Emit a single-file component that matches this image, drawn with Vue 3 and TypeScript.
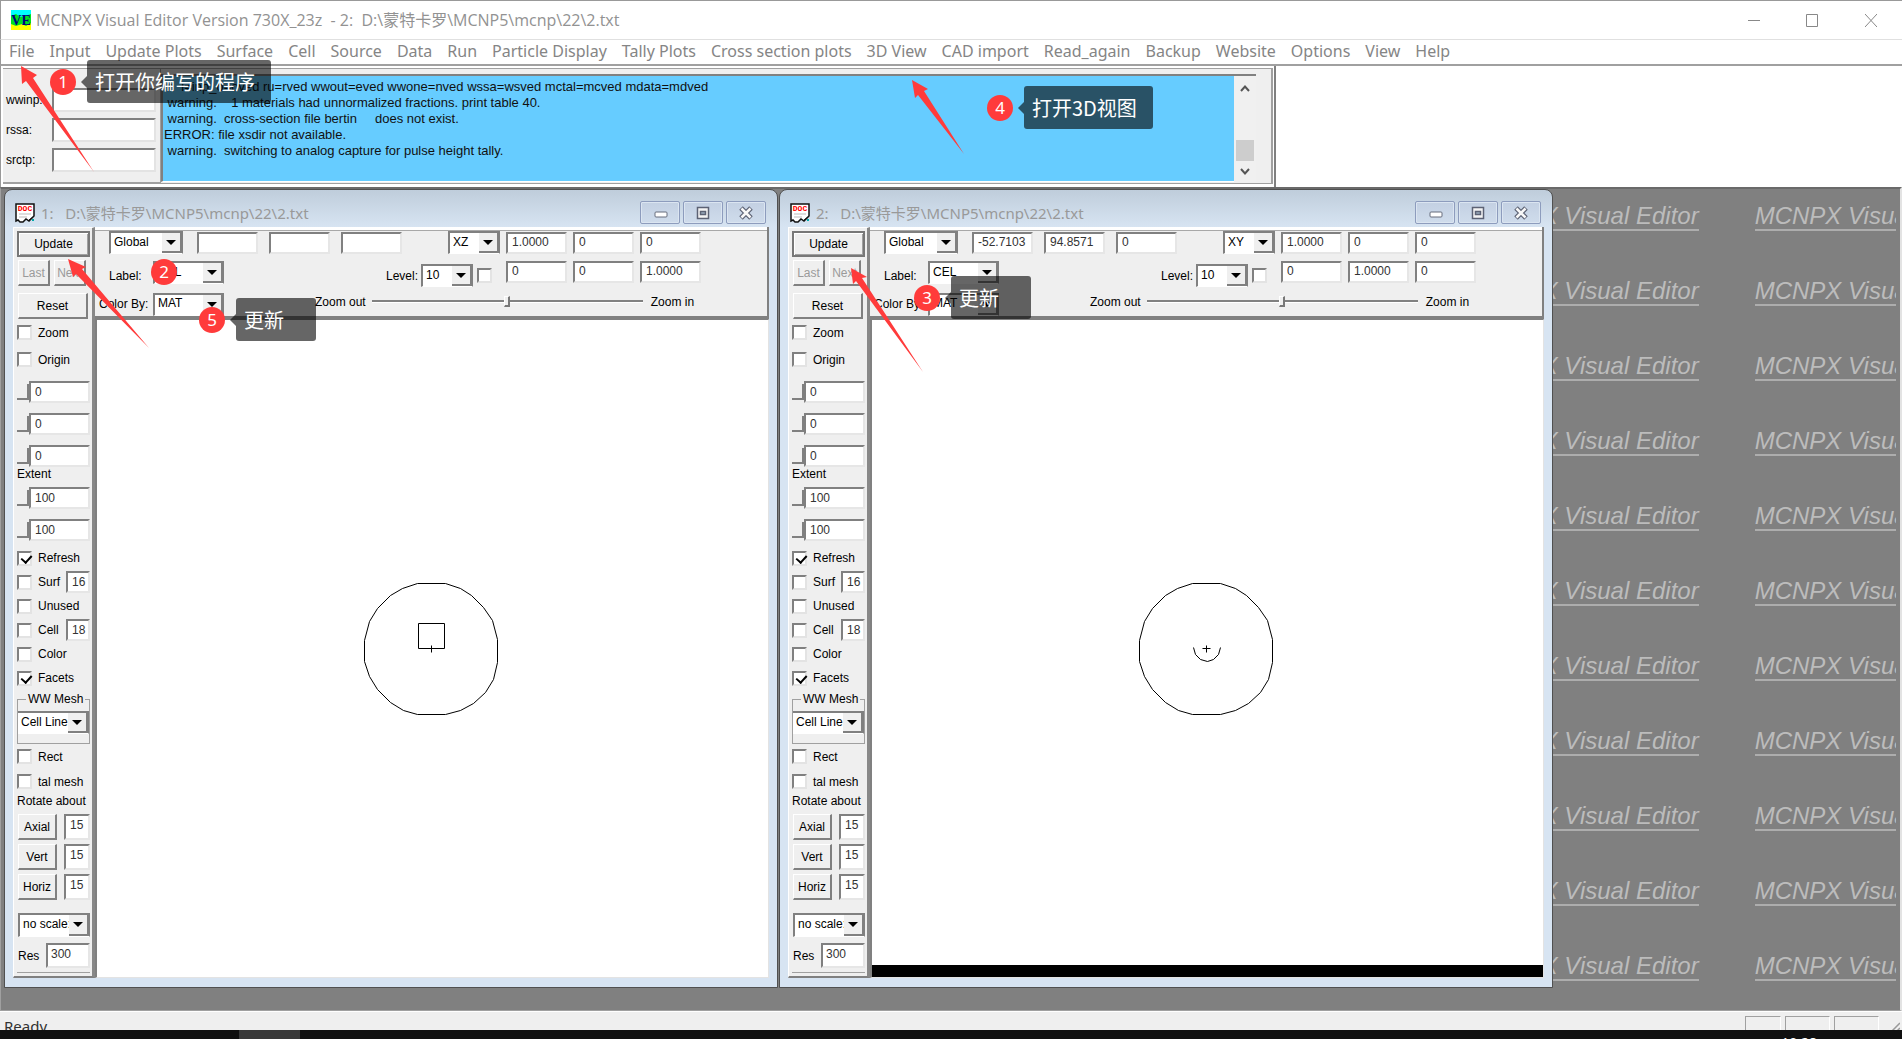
<script setup lang="ts">
import { reactive } from 'vue'

interface PlotWindow {
  id: number
  origin: string[]
  plane: string
  basisTop: string[]
  basisBottom: string[]
}

const filePath = 'D:\\蒙特卡罗\\MCNP5\\mcnp\\22\\2.txt'

const menus: string[] = [
  'File', 'Input', 'Update Plots', 'Surface', 'Cell', 'Source', 'Data', 'Run',
  'Particle Display', 'Tally Plots', 'Cross section plots', '3D View', 'CAD import',
  'Read_again', 'Backup', 'Website', 'Options', 'View', 'Help',
]

const fileFields: string[] = ['wwinp:', 'rssa:', 'srctp:']

const log = [
  'in  i=inp_o=oved ru=rved wwout=eved wwone=nved wssa=wsved mctal=mcved mdata=mdved',
  ' warning.    1 materials had unnormalized fractions. print table 40.',
  ' warning.  cross-section file bertin     does not exist.',
  'ERROR: file xsdir not available.',
  ' warning.  switching to analog capture for pulse height tally.',
].join('\n')

const windows = reactive<PlotWindow[]>([
  { id: 1, origin: ['', '', ''], plane: 'XZ', basisTop: ['1.0000', '0', '0'], basisBottom: ['0', '0', '1.0000'] },
  { id: 2, origin: ['-52.7103', '94.8571', '0'], plane: 'XY', basisTop: ['1.0000', '0', '0'], basisBottom: ['0', '1.0000', '0'] },
])

const options = [
  { label: 'Refresh', on: true, size: '' },
  { label: 'Surf', on: false, size: '16' },
  { label: 'Unused', on: false, size: '' },
  { label: 'Cell', on: false, size: '18' },
  { label: 'Color', on: false, size: '' },
  { label: 'Facets', on: true, size: '' },
]

const callouts = [
  { n: 1, x: 50, y: 59, text: '打开你编写的程序' },
  { n: 2, x: 151, y: 249, text: '' },
  { n: 3, x: 914, y: 275, text: '更新' },
  { n: 4, x: 987, y: 85, text: '打开3D视图' },
  { n: 5, x: 199, y: 297, text: '更新' },
]

const arrows: string[] = [
  '21,66 37,75 33,78 94,172 26,81 22,84',
  '68,259 86,267 82,269 149,348 76,274 73,277',
  '851,268 867,277 862,278 923,372 856,281 853,284',
  '912,80 928,89 924,91 964,154 918,95 915,98',
]
</script>

<template>
  <div class="app">
    <header class="titlebar">
      <svg class="logo" viewBox="0 0 20 20" aria-hidden="true">
        <rect width="20" height="20" fill="#ffff00" />
        <path d="M0 0H20V12L16 10 12 13 6 8 0 10Z" fill="#00ffff" />
        <path d="M0 6L5 4 9 7 14 6 20 4V13L15 16 11 14 5 16 0 14Z" fill="#00e020" />
        <text x="10" y="15" text-anchor="middle" class="logo-text">VE</text>
      </svg>
      <span class="title">MCNPX Visual Editor Version 730X_23z&nbsp; - 2:&nbsp; {{ filePath }}</span>
      <div class="win-controls">
        <button type="button" aria-label="Minimize"><svg viewBox="0 0 12 13"><path d="M0 6.500H12" /></svg></button>
        <button type="button" aria-label="Maximize"><svg viewBox="0 0 12 13"><path d="M.5.5H11.500V12.500H.5Z" /></svg></button>
        <button type="button" aria-label="Close"><svg viewBox="0 0 12 13"><path d="M0 0L12 13M12 0L0 13" /></svg></button>
      </div>
    </header>

    <nav class="menubar">
      <button v-for="m in menus" :key="m" type="button">{{ m }}</button>
    </nav>

    <section class="dialogbar">
      <div class="panel">
        <div class="files">
          <label v-for="f in fileFields" :key="f"><span>{{ f }}</span><input type="text" /></label>
        </div>
        <div class="log">
          <textarea readonly aria-label="Messages" wrap="off" :value="log"></textarea>
          <div class="scroll">
            <svg viewBox="0 0 10 8"><path d="M1 7L5 2.500 9 7" /></svg>
            <span class="thumb"></span>
            <svg viewBox="0 0 10 8"><path d="M1 1L5 5.500 9 1" /></svg>
          </div>
        </div>
      </div>
    </section>

    <main class="desktop">
      <div class="watermark" aria-hidden="true">
        <div v-for="r in 11" :key="r" class="mark-row">
          <span>MCNPX Visual Editor</span><span>MCNPX Visual Editor</span>
        </div>
      </div>

      <section v-for="w in windows" :key="w.id" class="child">
        <header class="child-title">
          <svg class="doc" viewBox="0 0 20 20" aria-hidden="true">
            <path d="M1 1H19V13L14 18 11 16 8 19H5L3 17 1 18Z" fill="#fff" stroke="#111" stroke-width="1.500" />
            <path d="M4 11H16M4 14H12" stroke="#bbb" />
            <path d="M14 17L18 14" fill="none" stroke="#111" />
            <path d="M17 17H19" stroke="#0aa" stroke-width="2" />
            <text x="10" y="8" text-anchor="middle" class="doc-text">DOC</text>
          </svg>
          <span>{{ w.id }}:&nbsp;&nbsp; {{ filePath }}</span>
          <div class="child-controls">
            <button type="button" aria-label="Minimize">
              <svg viewBox="0 0 16 14"><rect x="3" y="6" width="12" height="5" rx="1" fill="#fff" stroke="#666c7c" /></svg>
            </button>
            <button type="button" aria-label="Restore">
              <svg viewBox="0 0 16 14"><path d="M2.500 1.500H13.500V12.500H2.500Z" fill="#f4f4f4" stroke="#5c6274" stroke-width="1.500" /><path d="M5.500 5.500H10.500V8.500H5.500Z" fill="#9ab" stroke="#5c6274" stroke-width="1.500" /></svg>
            </button>
            <button type="button" aria-label="Close">
              <svg viewBox="0 0 16 14"><path d="M3 2L13 12M13 2L3 12" stroke="#5c6274" stroke-width="5" /><path d="M3.500 2.500L12.500 11.500M12.500 2.500L3.500 11.500" stroke="#f8f8f8" stroke-width="2.500" /></svg>
            </button>
          </div>
        </header>

        <div class="child-body">
          <aside class="side">
            <button type="button" class="btn update">Update</button>
            <div class="nav-row">
              <button type="button" class="btn" disabled>Last</button>
              <button type="button" class="btn" disabled>Next</button>
            </div>
            <button type="button" class="btn reset">Reset</button>
            <div class="checks tall">
              <label class="check"><input type="checkbox" />Zoom</label>
              <label class="check"><input type="checkbox" />Origin</label>
            </div>
            <div class="spins">
              <div v-for="i in 3" :key="i" class="spin">
                <button type="button" aria-label="Step"></button><input type="text" value="0" aria-label="Origin value" />
              </div>
            </div>
            <span class="caption extent">Extent</span>
            <div class="spins second">
              <div v-for="i in 2" :key="i" class="spin">
                <button type="button" aria-label="Step"></button><input type="text" value="100" aria-label="Extent value" />
              </div>
            </div>
            <div class="checks options">
              <div v-for="o in options" :key="o.label" class="option">
                <label class="check"><input type="checkbox" :checked="o.on" />{{ o.label }}</label>
                <input v-if="o.size" class="field size" type="text" :value="o.size" :aria-label="o.label + ' size'" />
              </div>
            </div>
            <fieldset class="mesh">
              <legend>WW Mesh</legend>
              <div class="combo"><select aria-label="WW Mesh"><option>Cell Line</option></select><i></i></div>
            </fieldset>
            <div class="checks">
              <label class="check"><input type="checkbox" />Rect</label>
              <label class="check"><input type="checkbox" />tal mesh</label>
            </div>
            <span class="caption">Rotate about</span>
            <div class="rotates">
              <div v-for="a in ['Axial', 'Vert', 'Horiz']" :key="a" class="rotate">
                <button type="button" class="btn">{{ a }}</button>
                <input class="field" type="text" value="15" :aria-label="a + ' angle'" />
              </div>
            </div>
            <div class="combo scale"><select aria-label="Scale"><option>no scale:</option></select><i></i></div>
            <label class="res"><span>Res</span><input class="field" type="text" value="300" /></label>
            <hr />
          </aside>

          <div class="view">
            <div class="tools">
              <div class="tool-row first">
                <div class="combo global"><select aria-label="Coordinates"><option>Global</option></select><i></i></div>
                <div class="triple wide">
                  <input v-for="(v, i) in w.origin" :key="i" class="field" type="text" :value="v" aria-label="Origin" />
                </div>
                <div class="combo plane"><select aria-label="Plane"><option>{{ w.plane }}</option></select><i></i></div>
                <div class="triple">
                  <input v-for="(v, i) in w.basisTop" :key="i" class="field" type="text" :value="v" aria-label="Basis" />
                </div>
              </div>
              <div class="tool-row second">
                <label class="pick"><span class="name">Label:</span><span class="combo by"><select><option>CEL</option></select><i></i></span></label>
                <label class="pick level"><span>Level:</span><span class="combo lv"><select><option>10</option></select><i></i></span></label>
                <input class="box" type="checkbox" aria-label="Level on" />
                <div class="triple">
                  <input v-for="(v, i) in w.basisBottom" :key="i" class="field" type="text" :value="v" aria-label="Basis" />
                </div>
              </div>
              <div class="tool-row third">
                <label class="pick color"><span>Color By:</span><span class="combo by"><select><option>MAT</option></select><i></i></span></label>
                <div class="zoom">
                  <label><span>Zoom out</span><input type="range" min="0" max="100" value="50" /></label>
                  <span>Zoom in</span>
                </div>
              </div>
            </div>
            <div class="canvas" :class="{ strip: w.id === 2 }">
              <svg class="plot" viewBox="0 0 136 134" fill="none" stroke="#000" aria-hidden="true">
                <path d="M54.500 1.500H82.500L97.500 6.500 108.500 13.500 120.500 25.500 129.500 38.500 134.500 57.500V80.500L130.500 97.500 122.500 110.500 110.500 121.500 97.500 128.500 82.500 132.500H54.500L40.500 128.500 27.500 120.500 14.500 107.500 6.500 94.500 1.500 79.500V58.500L6.500 39.500 14.500 26.500 27.500 13.500 39.500 6.500Z" />
                <path v-if="w.id === 1" d="M55.500 41.500H81.500V66.500H55.500Z" />
                <path v-else d="M55.500 65.500L57.500 72.500 62.500 77.500 69.500 79.500 75.500 77.500 80.500 72.500 82.500 65.500" />
                <path d="M68.500 63.500V70.500M64.500 66.500H72.500" />
              </svg>
            </div>
          </div>
        </div>
      </section>
    </main>

    <footer class="status">
      <span>Ready</span>
      <div class="panes"><i></i><i></i><i></i></div>
      <svg viewBox="0 0 16 18" class="grip"><path d="M6 17L16 7M11 17L16 12" stroke="#999" stroke-width="1.500" /></svg>
    </footer>
    <div class="taskbar"><span></span><time>10:28</time></div>

    <svg class="arrows" width="1" height="1" aria-hidden="true">
      <polygon v-for="p in arrows" :key="p" :points="p" fill="#ff3b3b" />
    </svg>
    <div v-for="c in callouts" :key="c.n" class="callout" :style="{ left: c.x + 'px', top: c.y + 'px' }">
      <b>{{ c.n }}</b>
      <span v-if="c.text" class="tip">{{ c.text }}</span>
    </div>
  </div>
</template>

<style>
body {
  margin: 0;
  overflow: hidden;
}
</style>

<style scoped>
* {
  box-sizing: border-box;
}
.app {
  position: relative;
  display: flex;
  flex-direction: column;
  height: 100vh;
  overflow: hidden;
  border-top: 1px solid #999;
  background: #fff;
  color: #000;
  font: 12px/14px "Liberation Sans", Arial, sans-serif;
}
button,
input,
select,
textarea {
  margin: 0;
  padding: 0;
  border: 0;
  border-radius: 0;
  background: none;
  color: inherit;
  font: inherit;
  min-width: 0;
  outline: 0;
}
svg {
  display: block;
}

.titlebar {
  display: flex;
  align-items: center;
  flex: none;
  height: 39px;
  padding: 0 16px 0 10px;
  border-left: 1px solid #999;
  border-bottom: 1px solid #e0e0e0;
  color: #929292;
  font: 16px/20px "Open Sans", "Noto Sans CJK SC", sans-serif;
}
.logo {
  width: 20px;
  height: 20px;
  margin-right: 5px;
}
.logo-text {
  font: bold 14px "Liberation Serif", serif;
  fill: #000080;
}
.title {
  white-space: pre;
}
.win-controls {
  display: flex;
  margin-left: auto;
}
.win-controls button {
  width: 58px;
  height: 30px;
}
.win-controls button:last-child {
  width: 30px;
  margin-left: 15px;
}
.win-controls svg {
  width: 12px;
  height: 13px;
  margin: 0 auto;
  fill: none;
  stroke: #888;
}

.menubar {
  display: flex;
  gap: 15px;
  flex: none;
  height: 26px;
  padding: 0 8px 3px;
  border-left: 1px solid #999;
  border-bottom: 2px solid #a0a0a0;
  color: #858585;
  font: 16px/20px "Noto Sans", "Noto Sans CJK SC", sans-serif;
}
.menubar button {
  white-space: nowrap;
}

.dialogbar {
  display: flex;
  flex: none;
  height: 121px;
  border-left: 1px solid #999;
}
.panel {
  display: flex;
  width: 1275px;
  padding: 2px 1px 3px 2px;
  border-right: 2px solid #808080;
  background: #fff;
}
.files {
  width: 158px;
  padding-top: 19px;
  border: 1px solid #a0a0a0;
  border-width: 1px 1px 2px 0;
  background: #efefef;
}
.files label {
  display: flex;
  align-items: center;
  justify-content: space-between;
  height: 24px;
  margin-bottom: 6px;
  padding: 0 4px 0 3px;
}
.files input {
  width: 104px;
  height: 24px;
  border: 2px solid #e3e3e3;
  border-top-color: #808080;
  border-left-color: #808080;
  background: #fff;
}
.log {
  display: flex;
  flex: 1;
  padding: 5px 15px 1px 0;
  border: 1px solid #a0a0a0;
  border-width: 1px 2px 1px 0;
  background: #efefef;
}
.log textarea {
  flex: 1;
  height: 108px;
  padding: 3px 0 0 1px;
  overflow: hidden;
  resize: none;
  border: 2px solid #808080;
  border-width: 2px 0 0 2px;
  border-bottom: 1px solid #fff;
  background: #66ccff;
  color: #111;
  font: 13px/16px "Liberation Sans", Arial, sans-serif;
}
.scroll {
  display: flex;
  flex-direction: column;
  align-items: center;
  width: 22px;
  height: 108px;
  padding: 8px 0 6px;
  border-top: 2px solid #808080;
  background: #f0f0f0;
}
.scroll svg {
  width: 10px;
  height: 8px;
  fill: none;
  stroke: #555;
  stroke-width: 2;
}
.scroll .thumb {
  width: 18px;
  height: 21px;
  margin: auto 0 7px;
  background: #cdcdcd;
}

.desktop {
  position: relative;
  display: flex;
  flex: 1;
  align-items: flex-start;
  gap: 1px;
  min-height: 0;
  padding: 0 0 0 3px;
  overflow: hidden;
  border: 1px solid #a0a0a0;
  border-top: 2px solid #6a6a6a;
  border-right: 2px solid #e3e3e3;
  background: #808080;
}
.watermark {
  position: absolute;
  left: 1470px;
  right: 4px;
  top: 11px;
  overflow: hidden;
}
.mark-row {
  display: flex;
  gap: 56px;
  height: 75px;
  color: #bcbcbc;
  font: italic 24px/32px "Liberation Sans", Arial, sans-serif;
  white-space: nowrap;
}
.mark-row span {
  height: 31px;
  border-bottom: 2px solid #adadad;
}

.child {
  position: relative;
  width: 774px;
  flex: none;
  padding: 0 8px 9px;
  border: 1px solid #505050;
  border-radius: 8px 8px 0 0;
  background: linear-gradient(#bfcddb, #d7e4f2 37px);
}
.child-title {
  display: flex;
  align-items: center;
  height: 37px;
  padding: 8px 3px 0 2px;
  color: #999;
  font: 15px/20px "Noto Sans", "Noto Sans CJK SC", sans-serif;
}
.child-title > span {
  white-space: pre;
}
.doc {
  width: 20px;
  height: 20px;
  margin-right: 6px;
}
.doc-text {
  font: bold 8px "Liberation Mono", monospace;
  fill: #ff0000;
}
.child-controls {
  display: flex;
  gap: 3px;
  margin-left: auto;
}
.child-controls button {
  width: 40px;
  height: 23px;
  border: 1px solid #8d9cbd;
  border-radius: 2px;
  background: linear-gradient(#c3d0e2, #cfdcec);
  box-shadow: inset 0 0 0 1px #dbe5f1;
}
.child-controls svg {
  width: 16px;
  height: 14px;
  margin: 0 auto;
}
.child-body {
  display: flex;
}

.side {
  display: flex;
  flex-direction: column;
  width: 82px;
  flex: none;
  padding: 3px 2px 0 3px;
  border: 1px solid #fff;
  border-right: 3px solid #888;
  border-bottom: 2px solid #808080;
  background: #efefef;
}
.btn {
  border: 2px solid #808080;
  border-top: 1px solid #fff;
  border-left: 1px solid #fff;
  background: #efefef;
  text-align: center;
}
.btn:disabled {
  color: #9a9a9a;
}
.btn.update {
  height: 26px;
  border: 2px solid #777;
  box-shadow: inset 1px 1px #fff, inset -1px -1px #a0a0a0;
}
.nav-row {
  display: flex;
  justify-content: space-between;
  height: 26px;
  margin: 3px 4px 7px 1px;
}
.nav-row .btn {
  width: 32px;
}
.reset {
  height: 26px;
  margin: 0 2px 0 1px;
}
.checks .check {
  height: 25px;
}
.checks.tall .check {
  height: 27px;
}
.checks.options .check {
  height: 24px;
}
.check {
  display: flex;
  align-items: center;
  gap: 6px;
}
input[type='checkbox'] {
  appearance: none;
  flex: none;
  width: 15px;
  height: 15px;
  border: 2px solid #e3e3e3;
  border-top-color: #808080;
  border-left-color: #808080;
  background: #fff;
}
input[type='checkbox']:checked::before {
  content: '';
  display: block;
  width: 5px;
  height: 8px;
  margin: 0 0 0 4px;
  border: solid #000;
  border-width: 0 2px 2px 0;
  transform: rotate(42deg);
}
.spins {
  display: flex;
  flex-direction: column;
  gap: 10px;
  margin-top: 8px;
}
.spins.second {
  margin: 6px 0 5px;
}
.spin {
  display: flex;
  align-items: center;
}
.spin button {
  width: 12px;
  height: 16px;
  border: 2px solid #808080;
  border-width: 0 2px 2px 0;
  background: #efefef;
}
.spin input,
.field {
  width: 61px;
  height: 22px;
  padding-left: 4px;
  border: 2px solid #e6e6e6;
  border-top-color: #808080;
  border-left-color: #808080;
  background: #fff;
  color: #333;
}
.tools .field {
  padding-bottom: 2px;
}
.option {
  display: flex;
  align-items: center;
  justify-content: space-between;
}
.field.size {
  width: 24px;
}
.mesh {
  height: 52px;
  margin: 2px 0 0;
  padding: 5px 0 0;
  border: 1px solid #a0a0a0;
}
.mesh legend {
  margin-left: 8px;
  padding: 0 2px;
}
.mesh .combo {
  width: 71px;
}
.combo {
  position: relative;
  display: block;
  flex: none;
  height: 23px;
  border: 2px solid #808080;
  border-right-width: 1px;
  border-bottom: 1px solid #fff;
  background: #fff;
}
.combo select {
  appearance: none;
  display: block;
  width: 100%;
  height: 100%;
  padding: 0 0 3px 3px;
}
.combo i {
  position: absolute;
  top: 0;
  right: 0;
  width: 20px;
  height: 100%;
  border: 2px solid #808080;
  border-width: 0 2px 2px 0;
  background: #efefef;
  pointer-events: none;
}
.combo i::after {
  content: '';
  position: absolute;
  left: 4px;
  top: 7px;
  border: 5px solid transparent;
  border-top-color: #000;
  border-bottom: 0;
}
.mesh .combo {
  border-left: 0;
}
.rotates {
  display: flex;
  flex-direction: column;
  gap: 4px;
  margin: 6px 0 13px 1px;
}
.rotate {
  display: flex;
  justify-content: space-between;
}
.rotate .btn {
  width: 39px;
  height: 26px;
}
.rotate .field {
  width: 26px;
  height: 26px;
  padding: 0 0 4px 4px;
}
.combo.scale {
  height: 24px;
  margin-left: 1px;
}
.res {
  display: flex;
  align-items: center;
  justify-content: space-between;
  margin: 6px 0 4px 1px;
}
.res .field {
  width: 44px;
  height: 25px;
  padding: 0 0 4px 3px;
}
hr {
  width: 100%;
  margin: 0 0 3px;
  border: 0;
  border-top: 1px solid #a0a0a0;
}

.view {
  display: flex;
  flex: 1;
  flex-direction: column;
  min-width: 0;
}
.tools {
  height: 92px;
  padding-top: 4px;
  border: 1px solid #808080;
  border-width: 0 2px 3px 0;
  background: linear-gradient(#fff 3px, #a8a8a8 3px, #a8a8a8 4px, #efefef 4px);
}
.tool-row {
  display: flex;
  align-items: center;
}
.tool-row.first {
  padding-left: 14px;
  margin-bottom: 7px;
}
.tool-row.second {
  align-items: flex-start;
  height: 30px;
  padding-left: 14px;
}
.tool-row.third {
  height: 26px;
  padding-left: 4px;
}
.global {
  width: 74px;
}
.triple {
  display: flex;
  gap: 6px;
}
.triple.wide {
  gap: 11px;
  margin: 0 46px 0 14px;
}
.plane {
  width: 52px;
  margin-right: 6px;
}
.pick {
  display: flex;
  align-items: center;
  justify-content: space-between;
  width: 115px;
}
.pick .name {
  padding-top: 6px;
}
.pick.color {
  width: 125px;
}
.by {
  width: 71px;
}
.pick.level {
  width: 87px;
  margin: 3px 4px 0 162px;
}
.lv {
  width: 52px;
}
.box {
  margin: 7px 14px 0 0;
}
.zoom {
  display: flex;
  gap: 8px;
  margin-left: 91px;
  padding-bottom: 5px;
}
.zoom label {
  display: flex;
  align-items: center;
  gap: 6px;
}
.zoom input {
  appearance: none;
  width: 271px;
  height: 12px;
  background: linear-gradient(transparent 4px, #808080 4px, #808080 6px, #fff 6px, #fff 7px, transparent 7px);
}
.zoom input::-webkit-slider-thumb {
  appearance: none;
  width: 6px;
  height: 11px;
  border: 1px solid #fff;
  border-right: 2px solid #777;
  border-bottom: 2px solid #777;
  background: #efefef;
}
.canvas {
  flex: 1;
  border: 1px solid #e3e3e3;
  border-top: 1px solid #808080;
  border-left: 2px solid #808080;
  background: #fff;
  padding: 262px 0 0 266px;
}
.canvas.strip {
  box-shadow: inset 0 -12px #000;
}
.plot {
  width: 136px;
  height: 134px;
}

.status {
  display: flex;
  flex: none;
  height: 19px;
  padding: 4px 0 0 4px;
  overflow: hidden;
  border-top: 1px solid #fff;
  background: #efefef;
  color: #333;
  font: 15px/20px "Noto Sans", sans-serif;
}
.panes {
  display: flex;
  gap: 4px;
  margin-left: auto;
}
.panes i {
  width: 45px;
  height: 20px;
  border: 1px solid #a0a0a0;
  border-right-color: #fff;
}
.panes i:first-child {
  width: 36px;
}
.grip {
  width: 16px;
  height: 18px;
  margin: 0 2px 0 5px;
}
.taskbar {
  display: flex;
  justify-content: space-between;
  flex: none;
  height: 9px;
  padding: 0 85px 0 239px;
  overflow: hidden;
  background: #101010;
}
.taskbar span {
  width: 61px;
  height: 100%;
  background: #383838;
}
.taskbar time {
  padding-top: 4px;
  color: #fff;
  font: 14px/18px "Noto Sans", sans-serif;
}

.arrows {
  position: absolute;
  left: 0;
  top: -1px;
  overflow: visible;
}
.callout {
  position: absolute;
  display: flex;
  align-items: center;
  gap: 11px;
  height: 43px;
  color: #fff;
}
.callout b {
  width: 26px;
  height: 26px;
  border-radius: 50%;
  background: #ff3b3b;
  font: 17px/25px "Noto Sans", sans-serif;
  text-align: center;
}
.tip {
  position: relative;
  min-width: 80px;
  padding: 0 16px 0 8px;
  border-radius: 3px;
  background: rgba(0, 0, 0, 0.6);
  font: 20px/43px "Noto Sans CJK SC", sans-serif;
  white-space: nowrap;
}
.tip::before {
  content: '';
  position: absolute;
  left: -6px;
  top: 16px;
  border: 6px solid transparent;
  border-right-color: rgba(0, 0, 0, 0.6);
  border-left: 0;
}
</style>
